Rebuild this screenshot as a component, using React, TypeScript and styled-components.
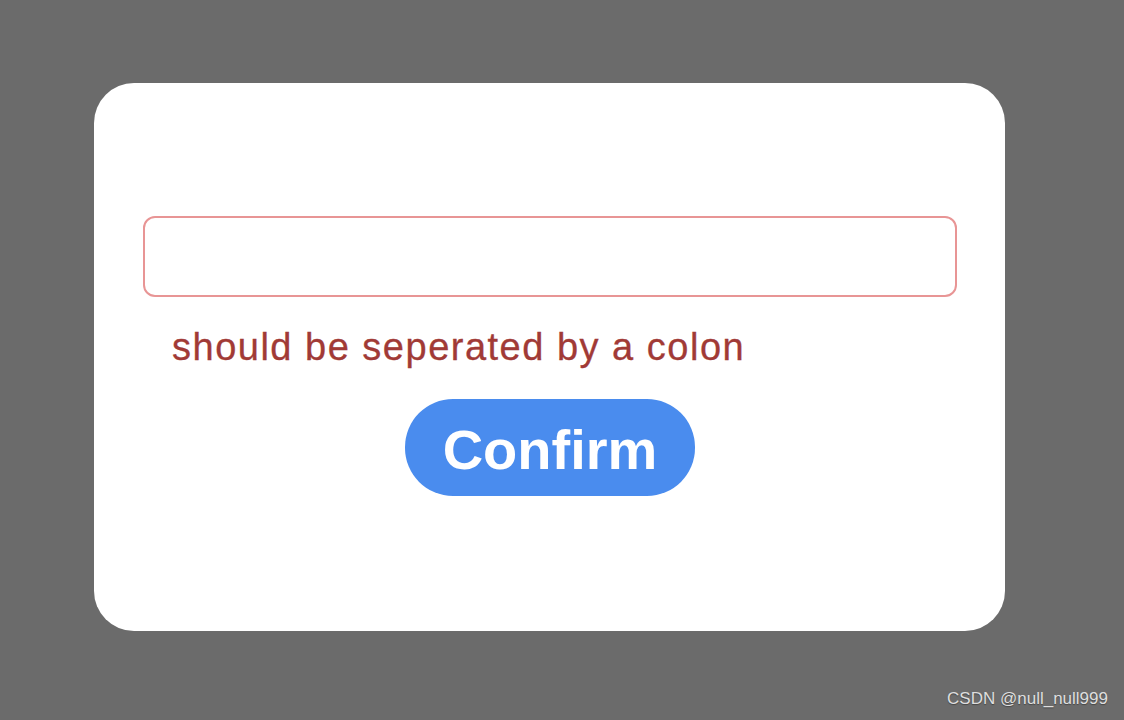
import React from 'react';
import styled, { createGlobalStyle } from 'styled-components';

const GlobalStyle = createGlobalStyle`
  html, body {
    margin: 0;
    padding: 0;
    background: #6b6b6b;
    font-family: "Liberation Sans", Arial, sans-serif;
  }
`;

export default function App() {
  return (
    <>
      <GlobalStyle />
      <Page>
        <Card>
          <Field type="text" />
          <ErrorText>should be seperated by a colon</ErrorText>
          <ConfirmButton>Confirm</ConfirmButton>
        </Card>
        <Watermark>CSDN @null_null999</Watermark>
      </Page>
    </>
  );
}

const Page = styled.div`
  width: 1124px;
  height: 720px;
  display: flex;
  flex-direction: column;
  align-items: flex-start;
  padding: 83px 0 0 94px;
  box-sizing: border-box;
  position: relative;
`;

const Card = styled.div`
  width: 911px;
  height: 548px;
  box-sizing: border-box;
  background: #ffffff;
  border-radius: 40px;
  padding: 133px 48px 0 49px;
  display: flex;
  flex-direction: column;
  align-items: stretch;
`;

const Field = styled.input`
  height: 81px;
  box-sizing: border-box;
  border: 2px solid #e89595;
  border-radius: 12px;
  outline: none;
  background: #fff;
  font-size: 30px;
  padding: 0 20px;
`;

const ErrorText = styled.div`
  margin: 28px 0 0 29px;
  color: #a13a36;
  font-size: 38px;
  line-height: 44px;
  letter-spacing: 1.5px;
  -webkit-text-stroke: 0.3px #a13a36;
`;

const ConfirmButton = styled.button`
  align-self: center;
  margin-top: 30px;
  width: 290px;
  height: 97px;
  border: none;
  border-radius: 48px;
  background: #4a8cee;
  color: #ffffff;
  font-family: "Liberation Sans", Arial, sans-serif;
  font-weight: 700;
  font-size: 56px;
  padding: 4px 0 0 0;
`;

const Watermark = styled.div`
  position: absolute;
  right: 16px;
  bottom: 11px;
  color: #dedede;
  font-size: 17px;
  text-shadow: 0 1px 1px rgba(0, 0, 0, 0.35);
`;
